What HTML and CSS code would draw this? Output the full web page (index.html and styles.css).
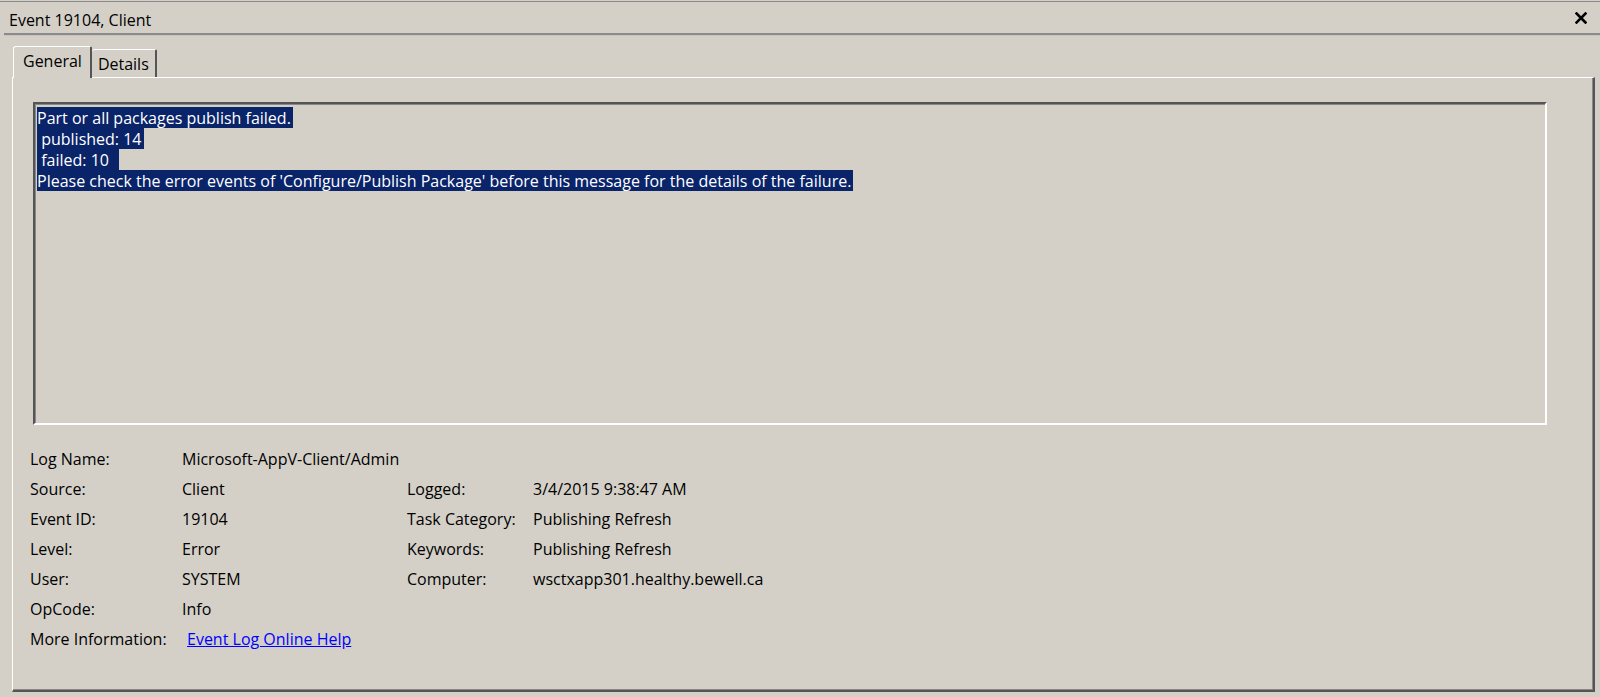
FILE: index.html
```html
<!DOCTYPE html>
<html>
<head>
<meta charset="utf-8">
<title>Event 19104, Client</title>
<link rel="stylesheet" href="styles.css">
</head>
<body>
<div class="window">
  <div class="titlebar">
    <span class="title">Event 19104, Client</span>
    <span class="close" aria-label="Close">
      <svg width="12" height="12" viewBox="0 0 12 12"><path d="M1.5 1.5 L10.5 10.5 M10.5 1.5 L1.5 10.5" stroke="#000" stroke-width="2.6" stroke-linecap="square"/></svg>
    </span>
  </div>
  <div class="separator"></div>
  <div class="tabs-area">
    <div class="tabs">
      <div class="tab active">General</div>
      <div class="tab">Details</div>
    </div>
    <div class="panel">
      <div class="message">
        <div class="sel">Part or all packages publish failed.</div>
        <div class="sel"> published: 14</div>
        <div class="sel"> failed: 10  </div>
        <div class="sel">Please check the error events of 'Configure/Publish Package' before this message for the details of the failure.</div>
      </div>
      <div class="fields">
        <div class="lbl">Log Name:</div><div class="val span3">Microsoft-AppV-Client/Admin</div>
        <div class="lbl">Source:</div><div class="val">Client</div><div class="lbl">Logged:</div><div class="val">3/4/2015 9:38:47 AM</div>
        <div class="lbl">Event ID:</div><div class="val">19104</div><div class="lbl">Task Category:</div><div class="val">Publishing Refresh</div>
        <div class="lbl">Level:</div><div class="val">Error</div><div class="lbl">Keywords:</div><div class="val">Publishing Refresh</div>
        <div class="lbl">User:</div><div class="val">SYSTEM</div><div class="lbl">Computer:</div><div class="val">wsctxapp301.healthy.bewell.ca</div>
        <div class="lbl">OpCode:</div><div class="val span3">Info</div>
        <div class="lbl">More Information:</div><div class="val span3"><a class="link" href="#">Event Log Online Help</a></div>
      </div>
    </div>
  </div>
</div>
</body>
</html>
```

FILE: styles.css
```css
html, body {
  margin: 0;
  padding: 0;
  background: #d4d0c8;
}
body {
  font-family: "Open Sans", "Noto Sans", "DejaVu Sans", sans-serif;
  font-size: 16px;
  color: #000;
  width: 1600px;
  height: 697px;
  overflow: hidden;
}
.window {
  border-top: 1px solid #8a8a8a;
  margin-top: 1px;
}
.titlebar {
  height: 31px;
  display: flex;
  align-items: center;
  justify-content: space-between;
  padding: 0 13px 0 9px;
  box-sizing: border-box;
}
.title {
  position: relative;
  top: 2px;
}
.close {
  display: flex;
  width: 12px;
  height: 12px;
}
.separator {
  margin-left: 4px;
  height: 2px;
  background: #8a8a8a;
  border-bottom: 1px solid #c8c4bd;
}
.tabs-area {
  padding: 10px 5px 0 12px;
}
.tabs {
  display: flex;
  align-items: flex-end;
  height: 31px;
  padding-left: 1px;
}
.tab {
  box-sizing: border-box;
  background: #d4d0c8;
  border-top: 1px solid #fff;
  border-left: 1px solid #fff;
  border-right: 2px solid #555;
  border-top-left-radius: 3px;
  border-top-right-radius: 2px;
  height: 28px;
  padding: 2px 6px 0 6px;
  line-height: 24px;
}
.tab + .tab {
  border-left: none;
}
.tab.active {
  height: 32px;
  padding: 0 8px 0 9px;
  line-height: 28px;
  margin-bottom: -1px;
  position: relative;
  z-index: 1;
  border-right: 2px solid #555;
}
.panel {
  box-sizing: border-box;
  height: 615px;
  border-top: 1px solid #fff;
  border-left: 1px solid #fff;
  border-right: 2px solid #555;
  border-bottom: 2px solid #555;
  box-shadow: inset -1px -1px 0 #888;
  padding: 24px 46px 0 20px;
}
.message {
  box-sizing: border-box;
  height: 323px;
  border-top: 2px solid #555;
  border-left: 2px solid #555;
  border-right: 2px solid #fff;
  border-bottom: 2px solid #fff;
  box-shadow: inset 1px 1px 0 #888;
  padding: 3px 0 0 2px;
}
.sel {
  width: fit-content;
  background: #0a246a;
  color: #fff;
  white-space: pre;
  height: 21px;
  line-height: 22px;
  padding-right: 2px;
}
.fields {
  display: grid;
  grid-template-columns: 152px 225px 126px 1fr;
  grid-auto-rows: 30px;
  margin-top: 19px;
  margin-left: -3px;
}
.lbl, .val {
  line-height: 30px;
  white-space: nowrap;
}
.span3 {
  grid-column: 2 / span 3;
}
.link {
  color: #0000ff;
  text-decoration: underline;
  margin-left: 5px;
}
```
